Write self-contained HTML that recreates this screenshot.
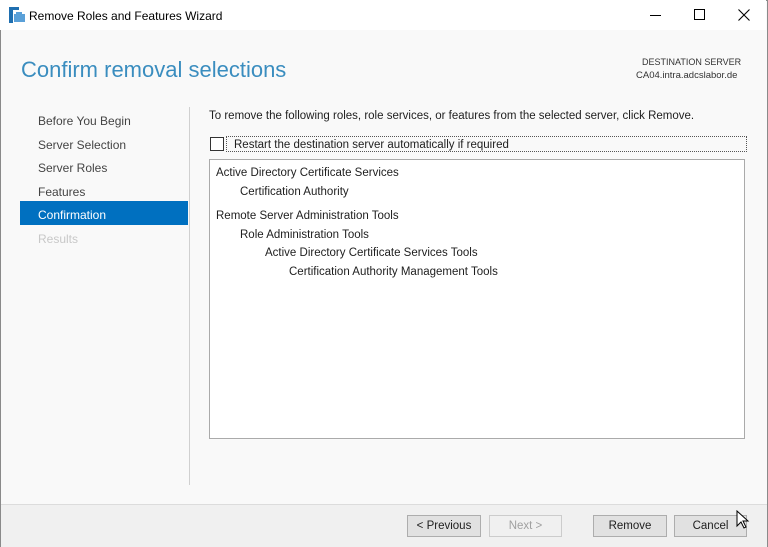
<!DOCTYPE html>
<html><head><style>
*{margin:0;padding:0;box-sizing:border-box}
body{width:768px;height:547px;overflow:hidden;font-family:"Liberation Sans",sans-serif;font-size:11.5px;color:#1e1e1e;background:#f9f9f9;position:relative}
.win{position:absolute;inset:0;border:1px solid #8a8a8a;border-bottom:none}
.tb{position:absolute;left:0;top:0;width:766px;height:30px;background:#fff}
.a{position:absolute;white-space:nowrap}
.nav{position:absolute;left:38px;font-size:12px;color:#444}
.btn{position:absolute;top:515px;height:22px;border:1px solid #adadad;background:#e1e1e1;font-size:11.5px;text-align:center;line-height:20px}
</style></head><body>
<div class="win"></div>
<div class="tb"></div>
<svg class="a" style="left:8px;top:6px" width="18" height="18" viewBox="0 0 18 18"><rect x="1" y="1" width="4" height="16" fill="#1f6fb0"/><rect x="1" y="1" width="10" height="3" fill="#1f6fb0"/><rect x="6" y="8" width="11" height="8" fill="#5aa0d8"/><rect x="8" y="6" width="6" height="3" fill="#5aa0d8"/></svg>
<div class="a" style="left:29px;top:9px;font-size:12px;color:#000">Remove Roles and Features Wizard</div>
<div class="a" style="left:650px;top:15px;width:11px;height:1px;background:#000"></div>
<div class="a" style="left:694px;top:9px;width:11px;height:11px;border:1px solid #000"></div>
<svg class="a" style="left:738px;top:9px" width="12" height="12" viewBox="0 0 12 12"><path d="M0.5 0.5L11.5 11.5M11.5 0.5L0.5 11.5" stroke="#000" stroke-width="1.1"/></svg>
<div class="a" style="left:21px;top:57px;font-size:22px;color:#3a8dbf">Confirm removal selections</div>
<div class="a" style="left:642px;top:57px;font-size:9px;color:#333">DESTINATION SERVER</div>
<div class="a" style="left:636px;top:70px;font-size:9.5px;color:#333">CA04.intra.adcslabor.de</div>
<div class="nav" style="top:114px">Before You Begin</div>
<div class="nav" style="top:138px">Server Selection</div>
<div class="nav" style="top:161px">Server Roles</div>
<div class="nav" style="top:185px">Features</div>
<div class="a" style="left:20px;top:201px;width:168px;height:24px;background:#0070c0"></div>
<div class="nav" style="top:208px;color:#fff">Confirmation</div>
<div class="nav" style="top:232px;color:#c8c8c8">Results</div>
<div class="a" style="left:189px;top:107px;width:1px;height:378px;background:#d0d0d0"></div>
<div class="a" style="left:209px;top:110px">To remove the following roles, role services, or features from the selected server, click Remove.</div>
<div class="a" style="left:210px;top:137px;width:14px;height:14px;border:1px solid #333;background:#fff"></div>
<div class="a" style="left:226px;top:136px;width:521px;height:16px;border:1px dotted #555"></div>
<div class="a" style="left:234px;top:139px">Restart the destination server automatically if required</div>
<div class="a" style="left:209px;top:159px;width:536px;height:280px;border:1px solid #aaa;background:#fff"></div>
<div class="a" style="left:216px;top:167px">Active Directory Certificate Services</div>
<div class="a" style="left:240px;top:186px">Certification Authority</div>
<div class="a" style="left:216px;top:210px">Remote Server Administration Tools</div>
<div class="a" style="left:240px;top:229px">Role Administration Tools</div>
<div class="a" style="left:265px;top:247px">Active Directory Certificate Services Tools</div>
<div class="a" style="left:289px;top:266px">Certification Authority Management Tools</div>
<div class="a" style="left:1px;top:504px;width:766px;height:43px;background:#f0f0f0;border-top:1px solid #dcdcdc"></div>
<div class="btn" style="left:407px;width:74px">&lt; Previous</div>
<div class="btn" style="left:489px;width:73px;color:#a0a0a0;background:#f0f0f0;border-color:#ccc">Next &gt;</div>
<div class="btn" style="left:593px;width:74px">Remove</div>
<div class="btn" style="left:674px;width:73px">Cancel</div>
<svg class="a" style="left:736px;top:510px" width="14" height="20" viewBox="0 0 14 20"><path d="M1 1 L1 16 L5 12 L8 18 L10 17 L7 11 L12 11 Z" fill="#fff" stroke="#000"/></svg>
</body></html>
